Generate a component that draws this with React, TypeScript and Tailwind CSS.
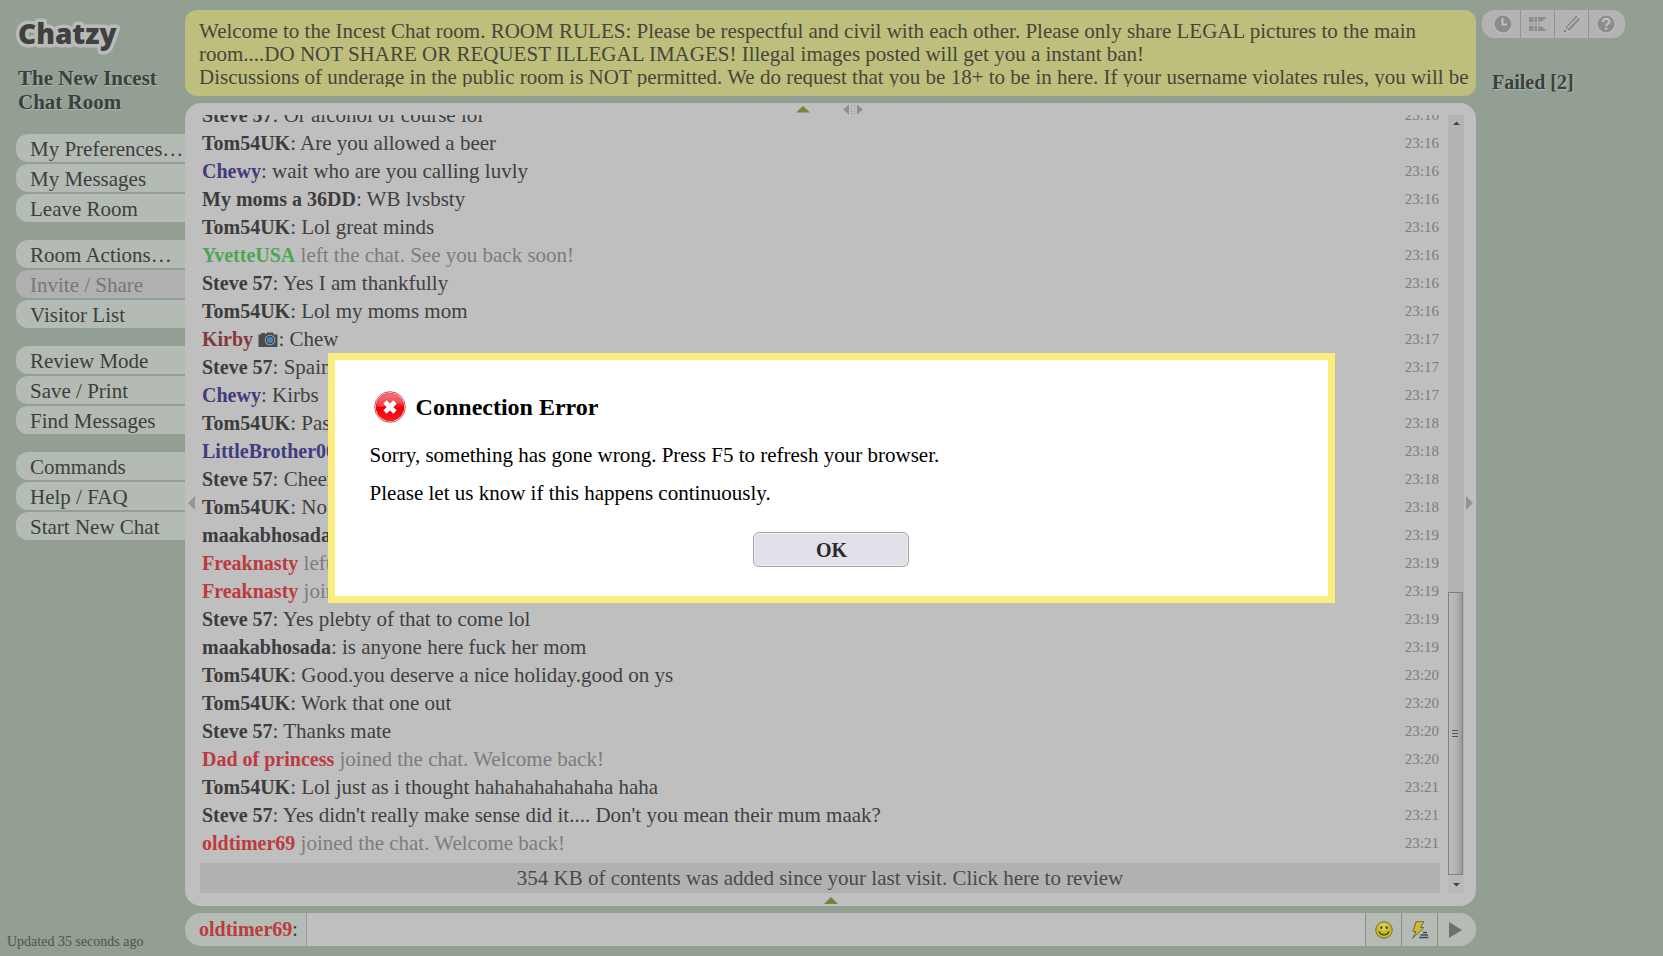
import React from "react";

type Tone = "dark" | "blue" | "green" | "maroon" | "red";

const tones: Record<Tone, string> = {
  dark: "text-[#3c3c3c]",
  blue: "text-[#3f3c80]",
  green: "text-[#4aa656]",
  maroon: "text-[#853a3a]",
  red: "text-[#bd3a3f]",
};

interface Message {
  who: string;
  tone: Tone;
  text: string;
  time: string;
  notice?: boolean;
  camera?: boolean;
}

const messages: Message[] = [
  { who: "Steve 57", tone: "dark", text: "Or alcohol of course lol", time: "23:16" },
  { who: "Tom54UK", tone: "dark", text: "Are you allowed a beer", time: "23:16" },
  { who: "Chewy", tone: "blue", text: "wait who are you calling luvly", time: "23:16" },
  { who: "My moms a 36DD", tone: "dark", text: "WB lvsbsty", time: "23:16" },
  { who: "Tom54UK", tone: "dark", text: "Lol great minds", time: "23:16" },
  { who: "YvetteUSA", tone: "green", text: "left the chat. See you back soon!", time: "23:16", notice: true },
  { who: "Steve 57", tone: "dark", text: "Yes I am thankfully", time: "23:16" },
  { who: "Tom54UK", tone: "dark", text: "Lol my moms mom", time: "23:16" },
  { who: "Kirby", tone: "maroon", text: "Chew", time: "23:17", camera: true },
  { who: "Steve 57", tone: "dark", text: "Spain", time: "23:17" },
  { who: "Chewy", tone: "blue", text: "Kirbs", time: "23:17" },
  { who: "Tom54UK", tone: "dark", text: "Pas", time: "23:18" },
  { who: "LittleBrother00", tone: "blue", text: "", time: "23:18" },
  { who: "Steve 57", tone: "dark", text: "Cheers", time: "23:18" },
  { who: "Tom54UK", tone: "dark", text: "No", time: "23:18" },
  { who: "maakabhosada", tone: "dark", text: "", time: "23:19" },
  { who: "Freaknasty", tone: "red", text: "left", time: "23:19", notice: true },
  { who: "Freaknasty", tone: "red", text: "join", time: "23:19", notice: true },
  { who: "Steve 57", tone: "dark", text: "Yes plebty of that to come lol", time: "23:19" },
  { who: "maakabhosada", tone: "dark", text: "is anyone here fuck her mom", time: "23:19" },
  { who: "Tom54UK", tone: "dark", text: "Good.you deserve a nice holiday.good on ys", time: "23:20" },
  { who: "Tom54UK", tone: "dark", text: "Work that one out", time: "23:20" },
  { who: "Steve 57", tone: "dark", text: "Thanks mate", time: "23:20" },
  { who: "Dad of princess", tone: "red", text: "joined the chat. Welcome back!", time: "23:20", notice: true },
  { who: "Tom54UK", tone: "dark", text: "Lol just as i thought hahahahahahaha haha", time: "23:21" },
  { who: "Steve 57", tone: "dark", text: "Yes didn't really make sense did it.... Don't you mean their mum maak?", time: "23:21" },
  { who: "oldtimer69", tone: "red", text: "joined the chat. Welcome back!", time: "23:21", notice: true },
];

const menu: string[][] = [
  ["My Preferences…", "My Messages", "Leave Room"],
  ["Room Actions…", "Invite / Share", "Visitor List"],
  ["Review Mode", "Save / Print", "Find Messages"],
  ["Commands", "Help / FAQ", "Start New Chat"],
];

function Camera() {
  return (
    <svg width="20" height="15" viewBox="0 0 20 15" className="inline-block align-[-1px]" aria-label="camera">
      <path d="M1 2.500h2V1h4v1h1l1-1.500h6L16 2.500h3.500V15H.5V2.500z" fill="#4a4c50" />
      <circle cx="12" cy="8" r="5.300" fill="#9ba2a8" />
      <circle cx="12" cy="8" r="4.300" fill="#2f3d4c" />
      <circle cx="12" cy="8" r="3.300" fill="#4b80aa" />
    </svg>
  );
}

function Logo() {
  return (
    <svg width="112" height="44" viewBox="0 0 112 44" role="img" aria-label="Chatzy">
      <text
        x="6"
        y="32"
        fontFamily="'Open Sans', sans-serif"
        fontWeight="800"
        fontSize="28"
        fill="#404040"
        stroke="#b9bbb9"
        strokeWidth="7"
        strokeLinejoin="round"
        paintOrder="stroke"
      >
        Chatzy
      </text>
    </svg>
  );
}

function Sidebar() {
  return (
    <aside className="flex w-[185px] shrink-0 flex-col">
      <div className="mt-3 ml-3">
        <Logo />
      </div>
      <h1 className="mt-[10px] ml-[18px] text-[21px] leading-6 font-bold text-[#3b403b] [text-shadow:1px_1px_1px_#b0b8b0]">
        The New Incest
        <br />
        Chat Room
      </h1>
      <nav className="mt-5 ml-4 flex flex-col gap-[18px]">
        {menu.map((group) => (
          <div key={group[0]} className="flex flex-col gap-[2px]">
            {group.map((label) => (
              <button
                key={label}
                disabled={label === "Invite / Share"}
                className="h-7 rounded-l-xl bg-[#b4bbb4] pl-[14px] text-left text-[21px] leading-[30px] whitespace-nowrap text-[#3c403c] disabled:bg-[#b0b0b0] disabled:text-[#777777]"
              >
                {label}
              </button>
            ))}
          </div>
        ))}
      </nav>
      <p className="mt-auto mb-1 ml-[7px] text-[14px] leading-5 text-[#4c554c]">Updated 35 seconds ago</p>
    </aside>
  );
}

function Scrollbar() {
  return (
    <div className="flex w-4 flex-col bg-[#b4b4b4]">
      <svg width="16" height="17" viewBox="0 0 16 17" aria-hidden="true">
        <path d="M5 10l3.500-3.500L12 10z" fill="#444" />
      </svg>
      <div className="flex-1" />
      <div className="flex h-[283px] w-[15px] items-center justify-center border border-[#808080] bg-linear-to-r from-[#bdbdbd] via-[#b4b4b4] to-[#9b9b9b]">
        <svg width="7" height="8" viewBox="0 0 7 8" aria-hidden="true">
          <path d="M0 .5h6M0 3.500h6M0 6.500h6" stroke="#555" />
        </svg>
      </div>
      <svg width="16" height="18" viewBox="0 0 16 18" className="bg-[#b9b9b9]" aria-hidden="true">
        <path d="M5 8l3.500 3.500L12 8z" fill="#444" />
      </svg>
    </div>
  );
}

function ChatPanel() {
  return (
    <section className="relative flex min-h-0 flex-1 flex-col rounded-2xl bg-[#bfbfbf] pt-3 pr-3 pb-[13px] pl-[15px]">
      <svg className="absolute top-0 left-[47.300%]" width="68" height="12" viewBox="0 0 68 12" aria-hidden="true">
        <path d="M0 9.500L7 3l7 6.500z" fill="#7f7f3c" />
        <path d="M47 6.500L53 1.500v10zM67 6.500L61 1.500v10z" fill="#8e8e8e" />
        <path d="M55.500 2v9M58.500 2v9" stroke="#999" strokeDasharray="1 1" />
      </svg>
      <svg className="absolute top-[49%] left-[3px]" width="7" height="14" viewBox="0 0 7 14" aria-hidden="true">
        <path d="M7 0v14L0 7z" fill="#959595" />
      </svg>
      <svg className="absolute top-[49%] right-[3px]" width="7" height="14" viewBox="0 0 7 14" aria-hidden="true">
        <path d="M0 0v14l7-7z" fill="#959595" />
      </svg>
      <svg className="absolute bottom-[2px] left-1/2 -translate-x-1/2" width="14" height="7" viewBox="0 0 14 7" aria-hidden="true">
        <path d="M0 7l7-7 7 7z" fill="#7f7f3c" />
      </svg>
      <div className="flex min-h-0 flex-1 gap-2">
        <div className="flex min-w-0 flex-1 flex-col">
          <div className="flex min-h-0 flex-1 flex-col justify-end overflow-hidden">
            {messages.map((m, i) => (
              <div key={i} className="flex h-7 shrink-0 justify-between pl-[2px] text-[21px] leading-7">
                <p className={m.notice ? "text-[#7c7c7c]" : "text-[#3f3f3f]"}>
                  <b className={`text-[20px] ${tones[m.tone]}`}>{m.who}</b>
                  {m.camera && <> <Camera /></>}
                  {m.notice ? " " : ": "}
                  {m.text}
                </p>
                <time className="pr-px text-[15px] text-[#7c7c7c]">{m.time}</time>
              </div>
            ))}
          </div>
          <button className="mt-[6px] h-[30px] shrink-0 bg-[#b1b1b1] text-[21px] leading-[30px] text-[#4a4a4a]">
            354 KB of contents was added since your last visit. Click here to review
          </button>
        </div>
        <Scrollbar />
      </div>
    </section>
  );
}

function Composer() {
  return (
    <form className="flex h-[33px] shrink-0 overflow-hidden rounded-2xl bg-[#b5bcb5]" onSubmit={(e) => e.preventDefault()}>
      <label htmlFor="message" className="w-[121px] pl-[14px] text-[20px] leading-[33px] text-[#333]">
        <b className="text-[#bd3a3f]">oldtimer69</b>:
      </label>
      <input id="message" className="min-w-0 flex-1 border-l border-[#929f92] bg-[#bfbfbf] px-2 text-[20px] outline-none" />
      <button type="button" aria-label="Smileys" className="flex w-9 items-center justify-center border-l border-[#879187]">
        <svg width="18" height="18" viewBox="0 0 18 18">
          <circle cx="9" cy="9" r="8.300" fill="#c4b82c" stroke="#83732a" />
          <ellipse cx="8.500" cy="6" rx="5" ry="4" fill="#d3cb55" />
          <ellipse cx="6.300" cy="6.500" rx="1" ry="1.600" fill="#4a3d12" />
          <ellipse cx="11.700" cy="6.500" rx="1" ry="1.600" fill="#4a3d12" />
          <path d="M4 10.500c2 4.500 8 4.500 10 0" fill="none" stroke="#4a3d12" strokeWidth="1.200" />
        </svg>
      </button>
      <button type="button" aria-label="Commands" className="flex w-9 items-center justify-center border-l border-[#879187]">
        <svg width="18" height="18" viewBox="0 0 18 18">
          <path d="M5 .7h8L9.500 6.500H13L1.500 17.300 5 10.500H2z" fill="#cdbb35" stroke="#6b5f30" strokeWidth=".9" />
          <path d="M12 11.500h4M9.500 14H17M8 16.500h9.500" stroke="#45455c" strokeWidth="1.400" />
        </svg>
      </button>
      <button type="submit" aria-label="Send" className="flex w-[39px] items-center border-l border-[#879187] pl-[11px]">
        <svg width="13" height="16" viewBox="0 0 13 16">
          <path d="M0 0l13 8-13 8z" fill="#6b716b" />
        </svg>
      </button>
    </form>
  );
}

function Toolbar() {
  const cell = "flex items-center justify-center border-l border-[#8e948e]";
  return (
    <div className="ml-[6px] flex h-7 w-[143px] overflow-hidden rounded-xl bg-[#b3b3b3]">
      <button aria-label="Clock" className="flex w-[38px] items-center justify-center pl-1">
        <svg width="20" height="20" viewBox="0 0 20 20">
          <circle cx="10" cy="10" r="9.500" fill="#bfbfbf" />
          <circle cx="10" cy="10" r="8.500" fill="#8c8c8c" />
          <path d="M9.500 4v6.500H14" fill="none" stroke="#c3c3c3" strokeWidth="2" />
        </svg>
      </button>
      <button aria-label="Layout" className={cell + " w-[34px]"}>
        <svg width="18" height="14" viewBox="0 0 18 14" fill="#8c8c8c">
          <path d="M0 0h4.500v5H0zM0 9h4.500v5H0zM5.500 0H8v5H5.500zM5.500 9H8v5H5.500z" />
          <path d="M9 0h8.500L13 4.500H9zM9 9.500h4l4.500 4.500H9z" />
          <path d="M0 6.200h12.500v1.600H0z" opacity=".45" />
        </svg>
      </button>
      <button aria-label="Edit" className={cell + " w-[34px]"}>
        <svg width="20" height="20" viewBox="0 0 20 20">
          <path d="M1 19l2-6L14 1l5 4L8 17z" fill="#8c8c8c" stroke="#c0c0c0" />
          <path d="M5.500 14L16 3.500" stroke="#bebebe" strokeWidth="1.300" />
          <path d="M1.500 18.500l1.700-5 3.800 3.500z" fill="#bebebe" />
          <path d="M1.500 18.500l1-3 2 2z" fill="#707070" />
        </svg>
      </button>
      <button aria-label="Help" className={cell + " w-[34px]"}>
        <svg width="20" height="20" viewBox="0 0 20 20">
          <circle cx="10" cy="10" r="9.500" fill="#bfbfbf" />
          <circle cx="10" cy="10" r="8.500" fill="#8c8c8c" />
          <path d="M7 8c0-4 6.500-4 6.500-.5 0 2.500-3.300 2-3.300 4.500M10.200 13.500v2.300" fill="none" stroke="#c0c0c0" strokeWidth="2.300" />
        </svg>
      </button>
    </div>
  );
}

function ErrorDialog() {
  return (
    <div className="fixed inset-0 flex items-center justify-center">
      <div role="alertdialog" aria-labelledby="error-title" className="w-[60.600%] border-[7px] border-[#fcee7e] bg-white px-[35px] pt-[29px] pb-[29px] text-[21px] text-black">
        <div className="flex h-9 items-center gap-[10px] pl-1">
          <svg width="32" height="34" viewBox="0 0 32 34" aria-hidden="true">
            <defs>
              <linearGradient id="ball" x1="0" y1="0" x2="0" y2="1">
                <stop offset="0" stopColor="#f25a5e" />
                <stop offset=".5" stopColor="#f0101a" />
                <stop offset=".52" stopColor="#e8000a" />
                <stop offset="1" stopColor="#ff1c1c" />
              </linearGradient>
            </defs>
            <circle cx="16" cy="17" r="15.300" fill="#fff" stroke="#d04a50" strokeWidth="1" />
            <circle cx="16" cy="17" r="14.200" fill="url(#ball)" />
            <path d="M3 16C4 0 28 0 29 14c-9-3-16 5-26 2z" fill="#fff" opacity=".18" />
            <path d="M11 12l10 10M21 12L11 22" stroke="#fff" strokeWidth="4.600" />
          </svg>
          <h2 id="error-title" className="text-[24px] font-bold">Connection Error</h2>
        </div>
        <p className="mt-[15px] leading-[30px]">Sorry, something has gone wrong. Press F5 to refresh your browser.</p>
        <p className="mt-2 leading-[30px]">Please let us know if this happens continuously.</p>
        <button className="mx-auto mt-6 block h-[35px] w-[156px] rounded-md border border-[#a3a3a8] bg-[#e1e1e9] text-[20px] font-bold text-[#2b2b2b] shadow-[inset_0_0_0_1px_#f0f0f4]">
          OK
        </button>
      </div>
    </div>
  );
}

export default function App() {
  return (
    <div className="flex h-screen overflow-hidden bg-[#929f92] font-['Liberation_Serif',serif]">
      <Sidebar />
      <main className="flex min-w-0 flex-1 flex-col gap-[7px] pt-[10px] pb-[10px]">
        <header className="h-[86px] shrink-0 rounded-xl bg-[#bfbf7d] pt-[10px] pl-[14px] text-[21px] leading-[23px] text-[#46463a]">
          <p className="h-[67px] overflow-hidden whitespace-nowrap">
            Welcome to the Incest Chat room. ROOM RULES: Please be respectful and civil with each other. Please only share LEGAL pictures to the main
            <br />
            room....DO NOT SHARE OR REQUEST ILLEGAL IMAGES! Illegal images posted will get you a instant ban!
            <br />
            Discussions of underage in the public room is NOT permitted. We do request that you be 18+ to be in here. If your username violates rules, you will be
          </p>
        </header>
        <ChatPanel />
        <Composer />
      </main>
      <aside className="w-[187px] shrink-0 pt-[10px]">
        <Toolbar />
        <h2 className="mt-[30px] ml-4 text-[20px] leading-7 font-bold text-[#3b403b] [text-shadow:1px_1px_1px_#b0b8b0]">Failed [2]</h2>
      </aside>
      <ErrorDialog />
    </div>
  );
}
